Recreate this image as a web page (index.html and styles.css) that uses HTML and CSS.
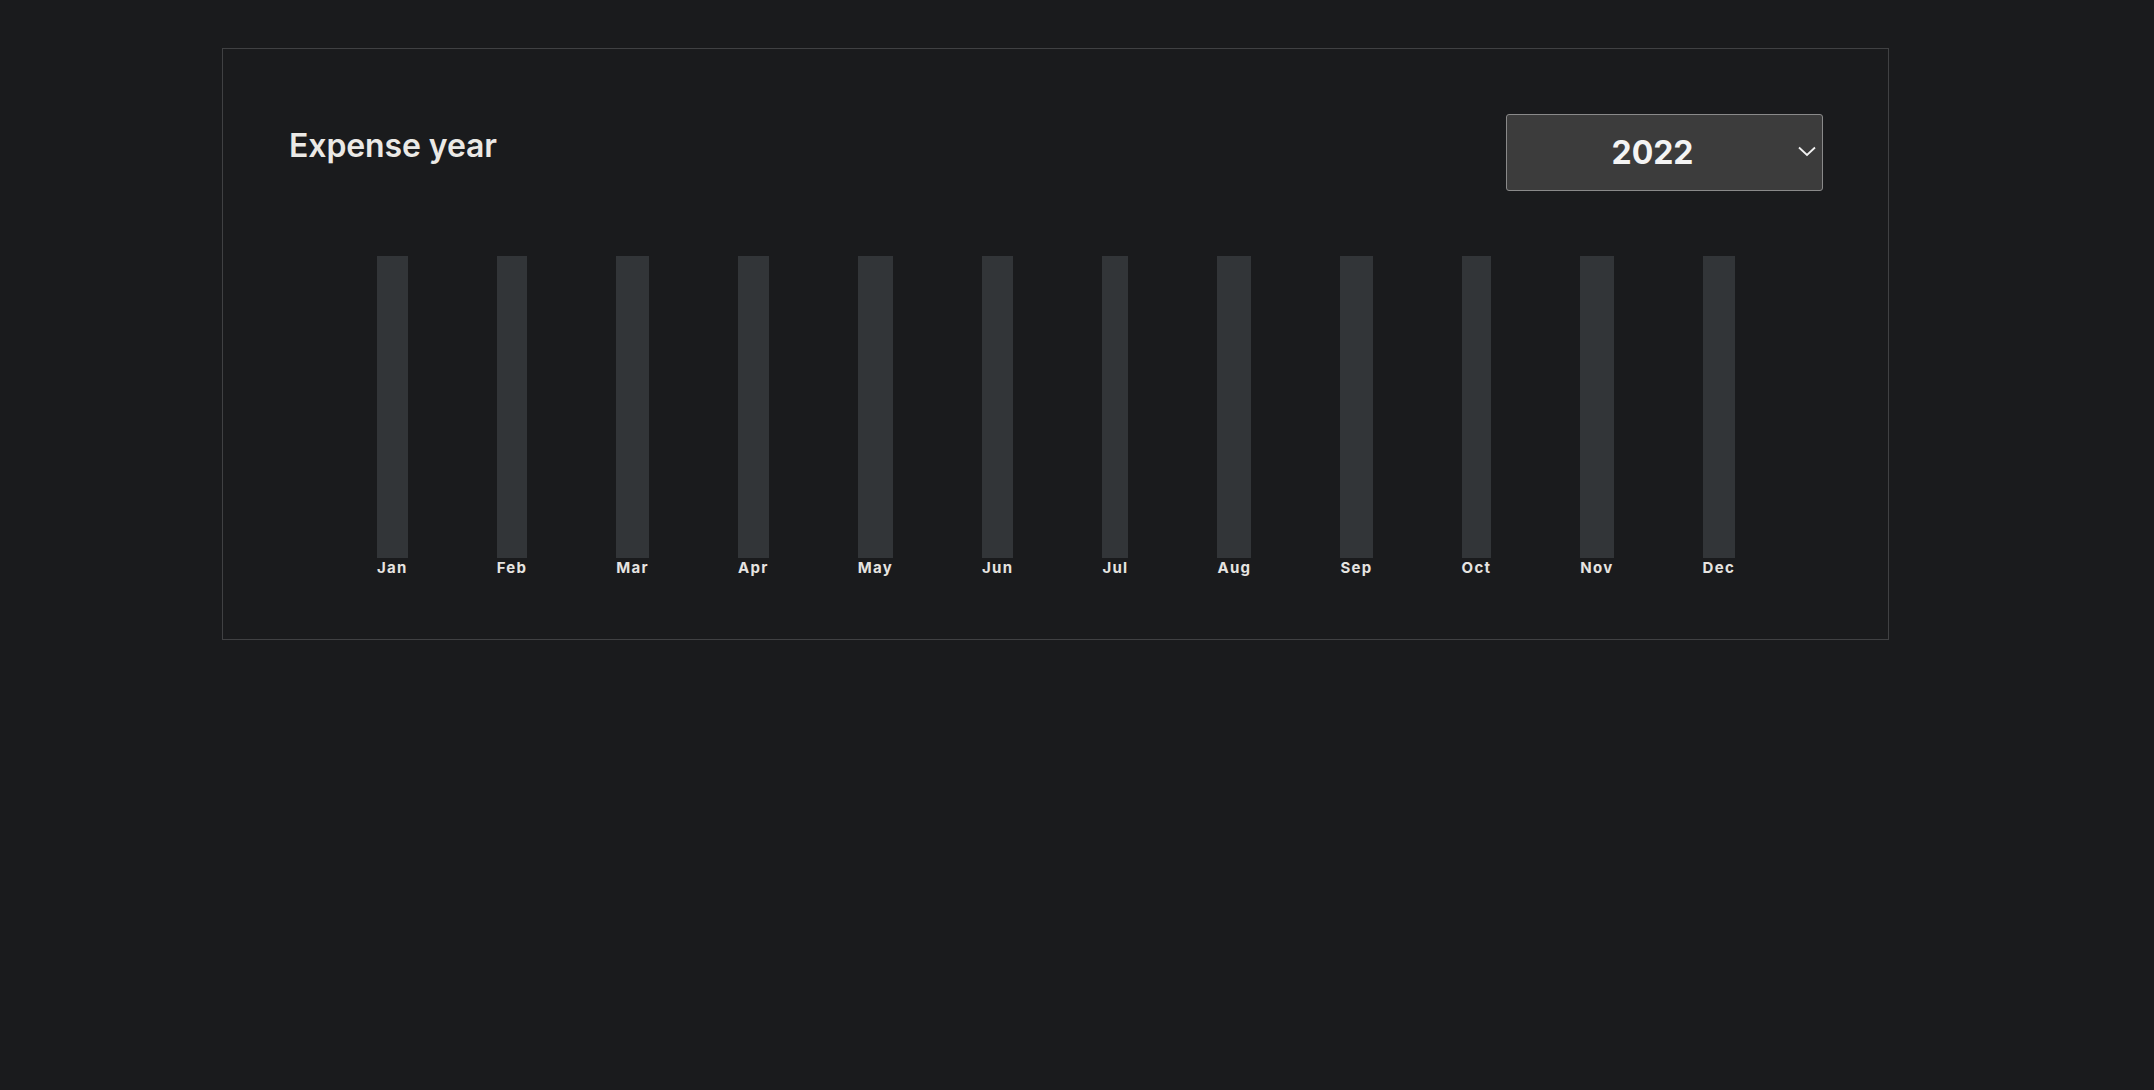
FILE: index.html
```html
<!DOCTYPE html>
<html lang="en">
<head>
<meta charset="utf-8">
<title>Expense year</title>
<link rel="stylesheet" href="styles.css">
</head>
<body>
<section class="card">
  <header class="card-head">
    <h2 class="title">Expense year</h2>
    <div class="select">
      <span class="select-value">2022</span>
      <svg class="chev" width="18" height="11" viewBox="0 0 18 11"><path d="M1 1.5 L9 9 L17 1.5" fill="none" stroke="#f2f2f2" stroke-width="1.8"/></svg>
    </div>
  </header>
  <div class="chart">
    <div class="col"><div class="bar"></div><span class="lbl">Jan</span></div>
    <div class="col"><div class="bar"></div><span class="lbl">Feb</span></div>
    <div class="col"><div class="bar"></div><span class="lbl">Mar</span></div>
    <div class="col"><div class="bar"></div><span class="lbl">Apr</span></div>
    <div class="col"><div class="bar"></div><span class="lbl">May</span></div>
    <div class="col"><div class="bar"></div><span class="lbl">Jun</span></div>
    <div class="col"><div class="bar"></div><span class="lbl">Jul</span></div>
    <div class="col"><div class="bar"></div><span class="lbl">Aug</span></div>
    <div class="col"><div class="bar"></div><span class="lbl">Sep</span></div>
    <div class="col"><div class="bar"></div><span class="lbl">Oct</span></div>
    <div class="col"><div class="bar"></div><span class="lbl">Nov</span></div>
    <div class="col"><div class="bar"></div><span class="lbl">Dec</span></div>
  </div>
</section>
</body>
</html>
```

FILE: styles.css
```css
* { box-sizing: border-box; }
html, body { margin: 0; background: #1a1b1d; }
body {
  padding: 48px 0 0 222px;
  font-family: Inter, "Noto Sans", sans-serif;
  color: #e8e6e3;
}
.card {
  width: 1667px;
  height: 592px;
  border: 1px solid #404143;
  padding: 65px 65px 0 66px;
}
.card-head {
  display: flex;
  justify-content: space-between;
  align-items: flex-start;
}
.title {
  margin: 12px 0 0;
  font-size: 32px;
  font-weight: 600;
  line-height: 39px;
  color: #ebe9e6;
  letter-spacing: -0.1px;
}
.select {
  width: 317px;
  height: 77px;
  background: #3c3c3c;
  border: 1px solid #8a8a8a;
  border-radius: 3px;
  display: flex;
  align-items: center;
  padding: 0 6px 2px 0;
}
.select-value {
  flex: 1;
  text-align: center;
  font-size: 32px;
  font-weight: 700;
  color: #f4f4f4;
  padding: 2px 0 0 0;
}
.chev { display: block; }
.chart {
  margin-top: 65px;
  display: flex;
  justify-content: center;
  gap: 89px;
}
.col {
  display: flex;
  flex-direction: column;
  align-items: stretch;
}
.bar {
  height: 302px;
  background: #323538;
}
.lbl {
  font-size: 15px;
  font-weight: 700;
  letter-spacing: 1.3px;
  line-height: 18px;
  color: #e6e4e1;
  text-align: center;
  margin-top: 1px;
}
```
